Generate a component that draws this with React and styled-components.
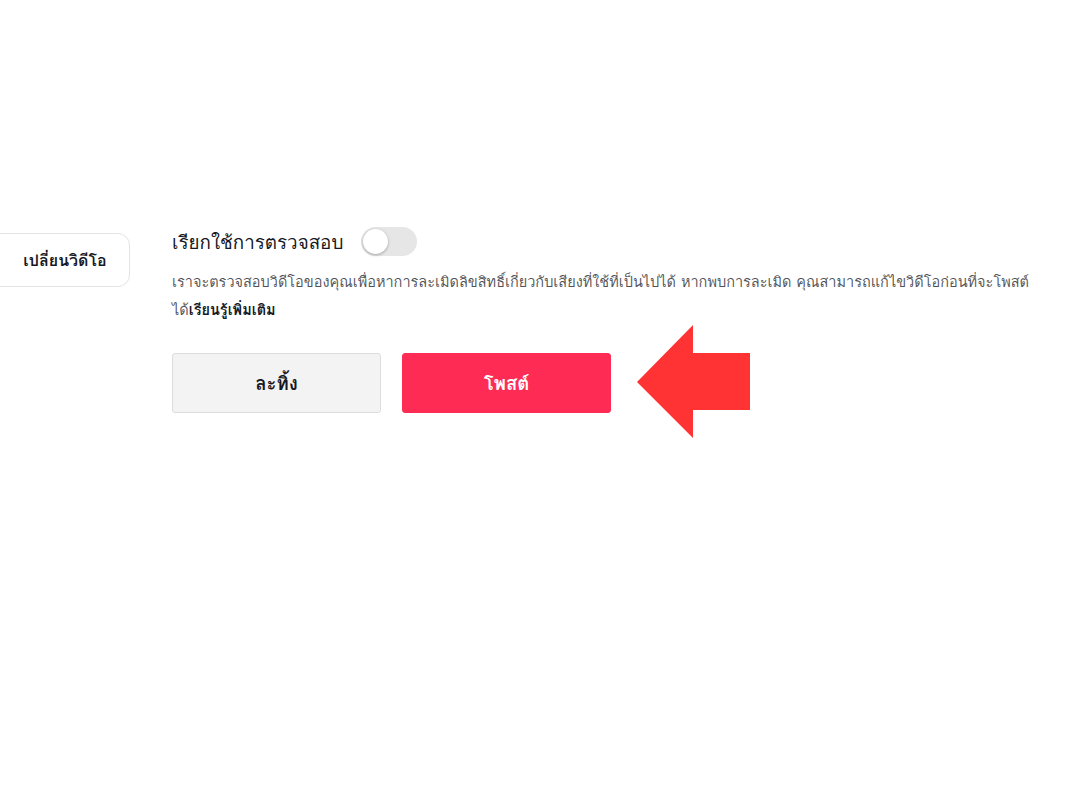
import React from "react";
import styled, { createGlobalStyle } from "styled-components";

const Global = createGlobalStyle`
  html, body { margin: 0; padding: 0; background: #fff; }
  body { font-family: Loma, "Noto Sans Thai Looped", "Liberation Sans", sans-serif; color: #161823; }
`;

const Page = styled.div`
  display: flex;
  align-items: flex-start;
  padding-top: 227px;
  width: 1067px;
  height: 800px;
  box-sizing: border-box;
  overflow: hidden;
`;

const SideColumn = styled.div`
  flex: 0 0 auto;
  margin-left: -20px;
  padding-top: 6px;
`;

const ChangeButton = styled.button`
  width: 150px;
  height: 54px;
  box-sizing: border-box;
  border: 1px solid #e3e3e4;
  border-radius: 12px;
  background: #fff;
  font-family: inherit;
  font-size: 16px;
  font-weight: 600;
  color: #161823;
  padding: 0 0 0 20px;
  text-align: center;
`;

const Content = styled.div`
  margin-left: 42px;
  display: flex;
  flex-direction: column;
`;

const TitleRow = styled.div`
  display: flex;
  align-items: center;
  gap: 18px;
  height: 29px;
`;

const Title = styled.span`
  font-size: 18.8px;
  color: #161823;
`;

const Switch = styled.div`
  position: relative;
  width: 56px;
  height: 29px;
  border-radius: 15px;
  background: #e6e6e7;
  box-sizing: border-box;
`;

const Knob = styled.span`
  position: absolute;
  left: 2px;
  top: 2px;
  width: 25px;
  height: 25px;
  border-radius: 50%;
  background: #fff;
  box-shadow: 0 1px 3px rgba(0, 0, 0, 0.3);
`;

const Description = styled.p`
  margin: 12px 0 0;
  font-size: 14.5px;
  line-height: 28px;
  color: rgba(22, 24, 35, 0.75);
  white-space: nowrap;
`;

const LearnMore = styled.span`
  font-weight: 700;
  color: #161823;
`;

const ButtonRow = styled.div`
  position: relative;
  display: flex;
  gap: 21px;
  margin-top: 29px;
`;

const ActionButton = styled.button`
  width: 209px;
  height: 60px;
  box-sizing: border-box;
  border-radius: 3px;
  border: 1px solid ${(p) => (p.$primary ? "#fe2c55" : "#dcdcdd")};
  background: ${(p) => (p.$primary ? "#fe2c55" : "#f3f3f3")};
  color: ${(p) => (p.$primary ? "#fff" : "#161823")};
  font-family: inherit;
  font-size: 18.5px;
  font-weight: 700;
`;

const Arrow = styled.svg`
  position: absolute;
  left: 465px;
  top: -28px;
`;

export default function App() {
  return (
    <>
      <Global />
      <Page>
        <SideColumn>
          <ChangeButton>เปลี่ยนวิดีโอ</ChangeButton>
        </SideColumn>
        <Content>
          <TitleRow>
            <Title>เรียกใช้การตรวจสอบ</Title>
            <Switch>
              <Knob />
            </Switch>
          </TitleRow>
          <Description>
            เราจะตรวจสอบวิดีโอของคุณเพื่อหาการละเมิดลิขสิทธิ์เกี่ยวกับเสียงที่ใช้ที่เป็นไปได้ หากพบการละเมิด คุณสามารถแก้ไขวิดีโอก่อนที่จะโพสต์
            <br />
            ได้<LearnMore>เรียนรู้เพิ่มเติม</LearnMore>
          </Description>
          <ButtonRow>
            <ActionButton>ละทิ้ง</ActionButton>
            <ActionButton $primary>โพสต์</ActionButton>
            <Arrow width="114" height="114" viewBox="0 0 114 114">
              <polygon points="0,57 56,0 56,28 113,28 113,85 56,85 56,113" fill="#ff3333" />
            </Arrow>
          </ButtonRow>
        </Content>
      </Page>
    </>
  );
}
